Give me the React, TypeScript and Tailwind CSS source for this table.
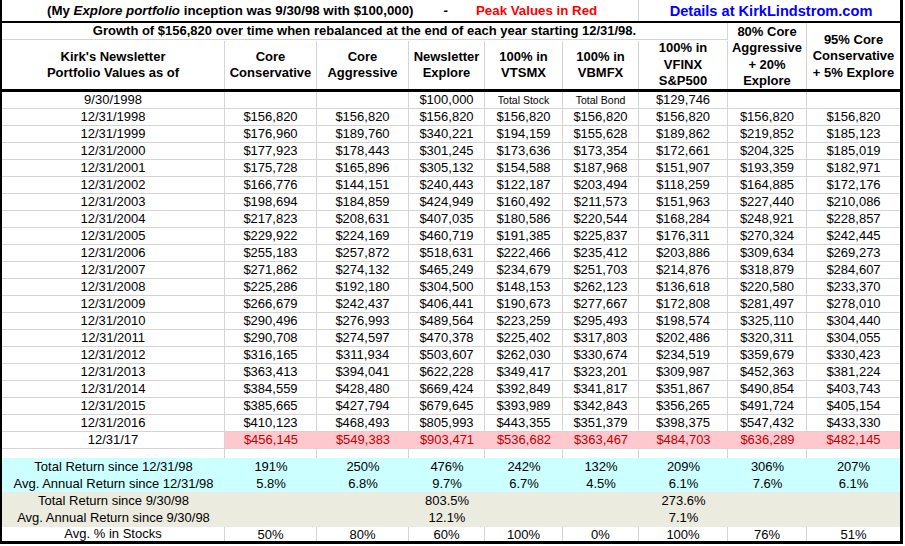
import { clsx } from 'clsx';

const W = [
  'w-[223px]',
  'w-[92px]',
  'w-[92px]',
  'w-[76px]',
  'w-[78px]',
  'w-[76px]',
  'w-[89px]',
  'w-[79px]',
  'w-[93px]',
];

const grid = 'border-[#d4d4d4]';

const rows: [string, string[]][] = [
  ['12/31/1998', ['156,820', '156,820', '156,820', '156,820', '156,820', '156,820', '156,820', '156,820']],
  ['12/31/1999', ['176,960', '189,760', '340,221', '194,159', '155,628', '189,862', '219,852', '185,123']],
  ['12/31/2000', ['177,923', '178,443', '301,245', '173,636', '173,354', '172,661', '204,325', '185,019']],
  ['12/31/2001', ['175,728', '165,896', '305,132', '154,588', '187,968', '151,907', '193,359', '182,971']],
  ['12/31/2002', ['166,776', '144,151', '240,443', '122,187', '203,494', '118,259', '164,885', '172,176']],
  ['12/31/2003', ['198,694', '184,859', '424,949', '160,492', '211,573', '151,963', '227,440', '210,086']],
  ['12/31/2004', ['217,823', '208,631', '407,035', '180,586', '220,544', '168,284', '248,921', '228,857']],
  ['12/31/2005', ['229,922', '224,169', '460,719', '191,385', '225,837', '176,311', '270,324', '242,445']],
  ['12/31/2006', ['255,183', '257,872', '518,631', '222,466', '235,412', '203,886', '309,634', '269,273']],
  ['12/31/2007', ['271,862', '274,132', '465,249', '234,679', '251,703', '214,876', '318,879', '284,607']],
  ['12/31/2008', ['225,286', '192,180', '304,500', '148,153', '262,123', '136,618', '220,580', '233,370']],
  ['12/31/2009', ['266,679', '242,437', '406,441', '190,673', '277,667', '172,808', '281,497', '278,010']],
  ['12/31/2010', ['290,496', '276,993', '489,564', '223,259', '295,493', '198,574', '325,110', '304,440']],
  ['12/31/2011', ['290,708', '274,597', '470,378', '225,402', '317,803', '202,486', '320,311', '304,055']],
  ['12/31/2012', ['316,165', '311,934', '503,607', '262,030', '330,674', '234,519', '359,679', '330,423']],
  ['12/31/2013', ['363,413', '394,041', '622,228', '349,417', '323,201', '309,987', '452,363', '381,224']],
  ['12/31/2014', ['384,559', '428,480', '669,424', '392,849', '341,817', '351,867', '490,854', '403,743']],
  ['12/31/2015', ['385,665', '427,794', '679,645', '393,989', '342,843', '356,265', '491,724', '405,154']],
  ['12/31/2016', ['410,123', '468,493', '805,993', '443,355', '351,379', '398,375', '547,432', '433,330']],
];

const peak = ['456,145', '549,383', '903,471', '536,682', '363,467', '484,703', '636,289', '482,145'];

const headers = [
  ["Kirk's Newsletter", 'Portfolio Values as of'],
  ['Core', 'Conservative'],
  ['Core', 'Aggressive'],
  ['Newsletter', 'Explore'],
  ['100% in', 'VTSMX'],
  ['100% in', 'VBMFX'],
  ['100% in', 'VFINX', 'S&P500'],
];

function Cell({ i, className, children, lines = true }: { i: number; className?: string; children?: React.ReactNode; lines?: boolean }) {
  return (
    <div
      className={clsx(
        W[i],
        'shrink-0 flex items-center justify-center whitespace-nowrap',
        lines && i < 8 && 'border-r',
        grid,
        className
      )}
    >
      {children}
    </div>
  );
}

function Row({ label, values, className, lines = true }: { label: string; values: string[]; className?: string; lines?: boolean }) {
  return (
    <div className={clsx('flex h-[17px]', lines && 'border-b', grid, className)}>
      <Cell i={0} lines={lines}>{label}</Cell>
      {values.map((v, k) => (
        <Cell key={k} i={k + 1} lines={lines}>
          {v}
        </Cell>
      ))}
    </div>
  );
}

export default function App() {
  return (
    <div className="w-[905px] h-[546px] bg-white text-black text-[13px] leading-[16px] font-['Liberation_Sans',Arial,sans-serif]">
      <div className="w-[903px] border-l-2 border-r-[3px] border-b-[3px] border-black">
        {/* title row */}
        <div className="flex h-[23px] border-b-2 border-black font-bold text-[13.3px]">
          <div className={clsx('w-[637px] flex items-center border-r', grid)}>
            <span className="ml-[45px]">
              (My <i>Explore portfolio</i> inception was 9/30/98 with $100,000)
            </span>
            <span className="ml-[30px]">-</span>
            <span className="ml-[28px] text-[#ff0000]">Peak Values in Red</span>
          </div>
          <div className="flex-1 flex items-center justify-center pl-[3px] text-[14.6px] text-[#0000ff]">
            Details at KirkLindstrom.com
          </div>
        </div>

        {/* header */}
        <div className="flex h-[69px] border-b-[3px] border-black font-bold leading-[16.5px]">
          <div className="w-[726px] flex flex-col">
            <div className={clsx('h-[17px] flex items-center justify-center border-b border-r', grid)}>
              Growth of $156,820 over time when rebalanced at the end of each year starting 12/31/98.
            </div>
            <div className="flex h-[49px] pt-[1px]">
              {headers.map((h, i) => (
                <div key={i} className={clsx(W[i], 'shrink-0 flex flex-col items-center justify-center border-r', grid)}>
                  {h.map((t) => (
                    <span key={t}>{t}</span>
                  ))}
                </div>
              ))}
            </div>
          </div>
          <div className={clsx('w-[79px] flex flex-col items-center justify-center border-r pt-[1px]', grid)}>
            <span>80% Core</span>
            <span>Aggressive</span>
            <span>+ 20%</span>
            <span>Explore</span>
          </div>
          <div className="w-[93px] flex flex-col items-center justify-center pt-[1px]">
            <span>95% Core</span>
            <span>Conservative</span>
            <span>+ 5% Explore</span>
          </div>
        </div>

        {/* data */}
        <div className={clsx('flex h-[17px] border-b', grid)}>
          <Cell i={0}>9/30/1998</Cell>
          <Cell i={1} />
          <Cell i={2} />
          <Cell i={3}>$100,000</Cell>
          <Cell i={4} className="text-[10.5px]">Total Stock</Cell>
          <Cell i={5} className="text-[10.5px]">Total Bond</Cell>
          <Cell i={6}>$129,746</Cell>
          <Cell i={7} />
          <Cell i={8} />
        </div>
        {rows.map(([d, vals]) => (
          <Row key={d} label={d} values={vals.map((v) => '$' + v)} />
        ))}
        <div className={clsx('flex h-[17px] border-b', grid)}>
          <Cell i={0}>12/31/17</Cell>
          <div className="flex-1 flex bg-[#ffc7ce] text-[#c00000]">
            {peak.map((v, k) => (
              <Cell key={k} i={k + 1} lines={false}>
                ${v}
              </Cell>
            ))}
          </div>
        </div>
        <div className="flex h-[9px]">
          {W.map((_, i) => (
            <Cell key={i} i={i} />
          ))}
        </div>

        {/* summary */}
        <div className="bg-[#ccffff]">
          <Row lines={false} label="Total Return since 12/31/98" values={['191%', '250%', '476%', '242%', '132%', '209%', '306%', '207%']} />
          <Row lines={false} label="Avg. Annual Return since 12/31/98" values={['5.8%', '6.8%', '9.7%', '6.7%', '4.5%', '6.1%', '7.6%', '6.1%']} />
        </div>
        <div className="bg-[#ecebdf]">
          <Row lines={false} label="Total Return since 9/30/98" values={['', '', '803.5%', '', '', '273.6%', '', '']} className="h-[17px]" />
          <Row lines={false} label="Avg. Annual Return since 9/30/98" values={['', '', '12.1%', '', '', '7.1%', '', '']} className="h-[18px]" />
        </div>
        <div className="flex h-[14px] leading-[14px]">
          <Cell i={0}>Avg. % in Stocks</Cell>
          {['50%', '80%', '60%', '100%', '0%', '100%', '76%', '51%'].map((v, k) => (
            <Cell key={k} i={k + 1} className="pt-[2px]">
              {v}
            </Cell>
          ))}
        </div>
      </div>
    </div>
  );
}
